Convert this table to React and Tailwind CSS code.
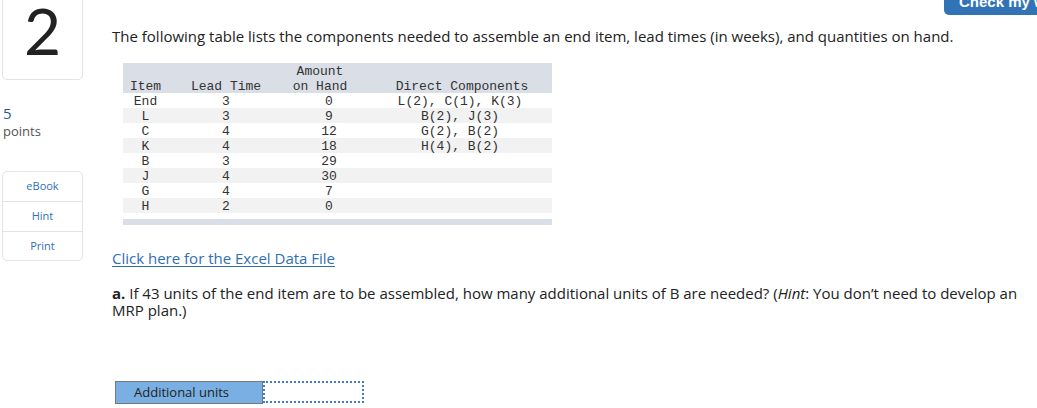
const rows = [
  { item: "End", lead: 3, qty: 0, comps: "L(2), C(1), K(3)" },
  { item: "L", lead: 3, qty: 9, comps: "B(2), J(3)" },
  { item: "C", lead: 4, qty: 12, comps: "G(2), B(2)" },
  { item: "K", lead: 4, qty: 18, comps: "H(4), B(2)" },
  { item: "B", lead: 3, qty: 29, comps: "" },
  { item: "J", lead: 4, qty: 30, comps: "" },
  { item: "G", lead: 4, qty: 7, comps: "" },
  { item: "H", lead: 2, qty: 0, comps: "" },
];

const sans = "font-['Open_Sans','Liberation_Sans',sans-serif]";

export default function App() {
  return (
    <div className={`relative w-[1037px] h-[408px] overflow-hidden bg-white text-[#333] ${sans}`}>
      <div className="flex -mt-[25px]">
        {/* left rail */}
        <aside className="w-[112px] shrink-0 pl-[2px]">
          <div className="w-[81px] h-[105px] border border-[#e3e3e3] rounded-[5px] flex items-center justify-center pt-[6px]">
            <span className="text-[64px] leading-none text-[#222] font-['Lato',sans-serif]">2</span>
          </div>
          <div className="mt-[24px] pl-[1px] text-[14px] leading-[18px]">
            <div className="text-[#1d5a99] text-[15px]">5</div>
            <div className="text-[#555] text-[13px]">points</div>
          </div>
          <div className="mt-[31px] w-[81px] border border-[#e3e3e3] rounded-[5px] text-[11px] text-[#2f6fb4]">
            <div className="h-[30px] flex items-center justify-center border-b border-[#e3e3e3]">eBook</div>
            <div className="h-[30px] flex items-center justify-center border-b border-[#e3e3e3]">Hint</div>
            <div className="h-[28px] flex items-center justify-center">Print</div>
          </div>
        </aside>

        {/* main column */}
        <main className="flex-1 min-w-0">
          <div className="flex justify-end">
            <button className="h-[40px] w-[137px] -mr-[44px] rounded-bl-[5px] bg-[#3273b6] text-white font-bold text-[15px] text-left pl-[15px] pt-[14px] font-['Liberation_Sans',sans-serif]">
              Check my work
            </button>
          </div>

          <p className="mt-[11px] text-[15px] leading-[20px] text-[#222]">
            The following table lists the components needed to assemble an end item, lead times (in weeks), and quantities on hand.
          </p>

          <div className="mt-[17px] ml-[11px] w-[429px] font-['Liberation_Mono',monospace] text-[13px] text-[#333]">
            <div className="bg-[#dadee6] h-[30px] grid grid-cols-[45px_116px_72px_196px] items-end leading-[15px] pb-[0px]">
              <div className="text-center translate-y-[1px]">Item</div>
              <div className="text-center translate-y-[1px]">Lead Time</div>
              <div className="text-center translate-y-[1px]">Amount<br />on Hand</div>
              <div className="text-center pl-[16px] translate-y-[1px]">Direct Components</div>
            </div>
            {rows.map((r, i) => (
              <div
                key={r.item}
                className={`grid grid-cols-[45px_116px_72px_196px] h-[15px] leading-[15px] pt-[1px] ${i % 2 === 1 ? "bg-[#f2f2f2]" : "bg-white"}`}
              >
                <div className="text-center">{r.item}</div>
                <div className="text-center">{r.lead}</div>
                <div className="text-center pl-[18px]">{r.qty}</div>
                <div className="text-center pl-[12px] whitespace-pre">{r.comps}</div>
              </div>
            ))}
            <div className="mt-[6px] h-[6px] bg-[#dadee6]" />
          </div>

          <a className="inline-block mt-[22px] text-[15px] text-[#2f6fb4] underline underline-offset-2">
            Click here for the Excel Data File
          </a>

          <p className="mt-[15px] pr-[14px] text-[15px] leading-[17px] text-[#222]">
            <b>a.</b> If 43 units of the end item are to be assembled, how many additional units of B are needed? (<i>Hint</i>: You don’t need to develop an MRP plan.)
          </p>

          <div className="mt-[62px] ml-[3px] flex">
            <div className="w-[148px] h-[23px] bg-[#79afe2] border border-[#777] flex items-center pl-[18px] text-[13px] text-[#222]">
              Additional units
            </div>
            <div className="w-[101px] h-[22px] border-2 border-dotted border-[#3f7ec2] bg-white" />
          </div>
        </main>
      </div>
    </div>
  );
}
